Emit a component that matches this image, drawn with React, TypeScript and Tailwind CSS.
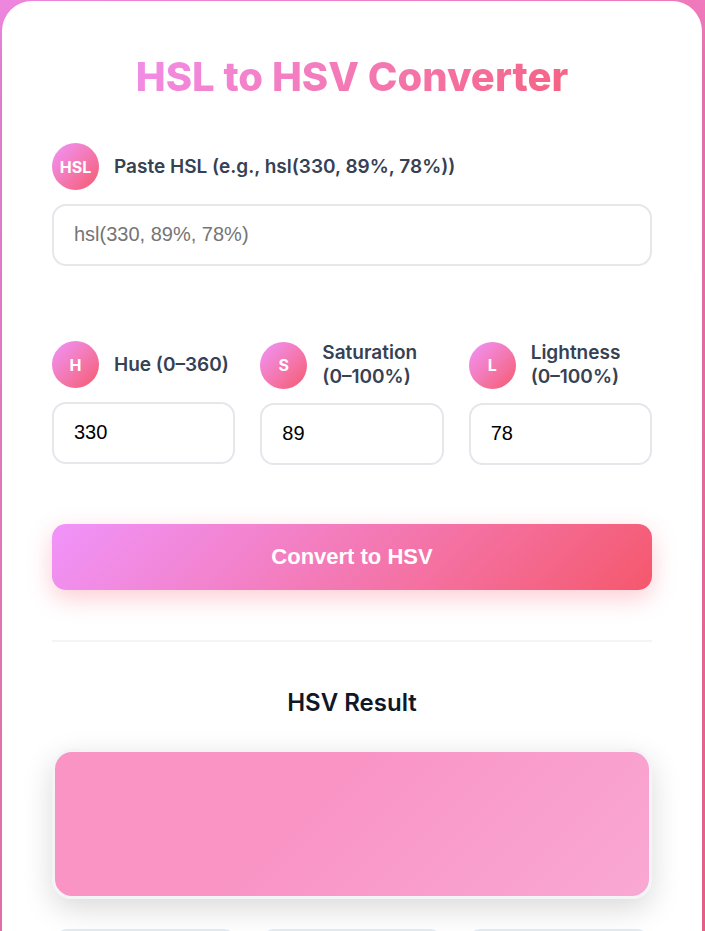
import { useState } from 'react'

interface FieldProps {
  id: string
  badge: string
  label: string
  value: string
  placeholder?: string
  onChange: (value: string) => void
}

const Field = ({ id, badge, label, value, placeholder, onChange }: FieldProps) => {
  return (
    <div>
      <label
        htmlFor={id}
        className="flex items-center gap-[15px] mb-[14px] text-[19px] leading-6 font-semibold text-gray-700"
      >
        <span className="flex items-center justify-center shrink-0 size-[47px] rounded-full bg-linear-135 from-[#f093fb] to-[#f5576c] text-base font-bold text-white">
          {badge}
        </span>
        {label}
      </label>
      <input
        id={id}
        type="text"
        value={value}
        placeholder={placeholder}
        onChange={(e) => onChange(e.target.value)}
        className="w-full h-[62px] px-5 pb-0.5 border-2 border-gray-200 rounded-[14px] bg-white font-['Liberation_Sans',sans-serif] text-xl text-black placeholder:text-[#757575]"
      />
    </div>
  )
}

// hue in degrees, saturation and lightness in percent
const toHsv = (h: number, s: number, l: number) => {
  const light = l / 100
  const v = light + (s / 100) * Math.min(light, 1 - light)
  const sat = v === 0 ? 0 : 2 * (1 - light / v)
  return [Math.round(h), Math.round(sat * 100), Math.round(v * 100)]
}

const App = () => {
  const [hsl, setHsl] = useState('')
  const [hue, setHue] = useState('330')
  const [saturation, setSaturation] = useState('89')
  const [lightness, setLightness] = useState('78')
  const [result, setResult] = useState([330, 40, 98])

  const pasteHsl = (value: string) => {
    setHsl(value)
    const match = value.match(/(\d+)\D+(\d+)\D+(\d+)/)
    if (match) {
      setHue(match[1])
      setSaturation(match[2])
      setLightness(match[3])
    }
  }

  const convert = () => {
    setResult(toHsv(Number(hue), Number(saturation), Number(lightness)))
  }

  return (
    <main className="min-h-screen bg-linear-135 from-[#f088e0] to-[#f46389] pl-[2px] pr-[3px] pt-px pb-5 font-['Inter',sans-serif]">
      <section className="max-w-[700px] mx-auto p-[50px] rounded-[30px] bg-white shadow-[0_25px_50px_rgba(0,0,0,0.15)]">
        <h1 className="mb-10 text-center text-[40px] leading-[52px] font-extrabold text-transparent bg-clip-text bg-linear-135 from-[#f093fb] to-[#f5576c]">
          HSL to HSV Converter
        </h1>

        <Field
          id="hsl"
          badge="HSL"
          label="Paste HSL (e.g., hsl(330, 89%, 78%))"
          value={hsl}
          placeholder="hsl(330, 89%, 78%)"
          onChange={pasteHsl}
        />

        <div className="grid grid-cols-3 gap-[25px] mt-[75px]">
          <Field id="hue" badge="H" label="Hue (0–360)" value={hue} onChange={setHue} />
          <Field
            id="saturation"
            badge="S"
            label="Saturation (0–100%)"
            value={saturation}
            onChange={setSaturation}
          />
          <Field
            id="lightness"
            badge="L"
            label="Lightness (0–100%)"
            value={lightness}
            onChange={setLightness}
          />
        </div>

        <button
          onClick={convert}
          className="w-full h-[66px] mt-[59px] pb-0.5 rounded-[14px] bg-linear-135 from-[#f093fb] to-[#f5576c] font-['Liberation_Sans',sans-serif] text-[22px] font-bold text-white shadow-[0_8px_25px_rgba(245,87,108,0.3)]"
        >
          Convert to HSV
        </button>

        <div className="mt-[50px] pt-[45px] border-t-2 border-gray-100">
          <h2 className="mb-[30px] text-center text-2xl leading-8 font-semibold text-gray-900">
            HSV Result
          </h2>
          <div className="h-[150px] mb-[30px] rounded-[20px] border-3 border-gray-100 bg-linear-135 from-[#f994c5] from-40% to-[#f9a8d4] bg-origin-border shadow-[0_10px_30px_rgba(0,0,0,0.15)]" />
          <div className="grid grid-cols-3 gap-5">
            {result.map((part, i) => (
              <output
                key={i}
                className="block p-6 rounded-2xl border-2 border-slate-200 bg-slate-50 text-center text-xl font-semibold text-gray-900"
              >
                {part}
              </output>
            ))}
          </div>
        </div>
      </section>
    </main>
  )
}

export default App
